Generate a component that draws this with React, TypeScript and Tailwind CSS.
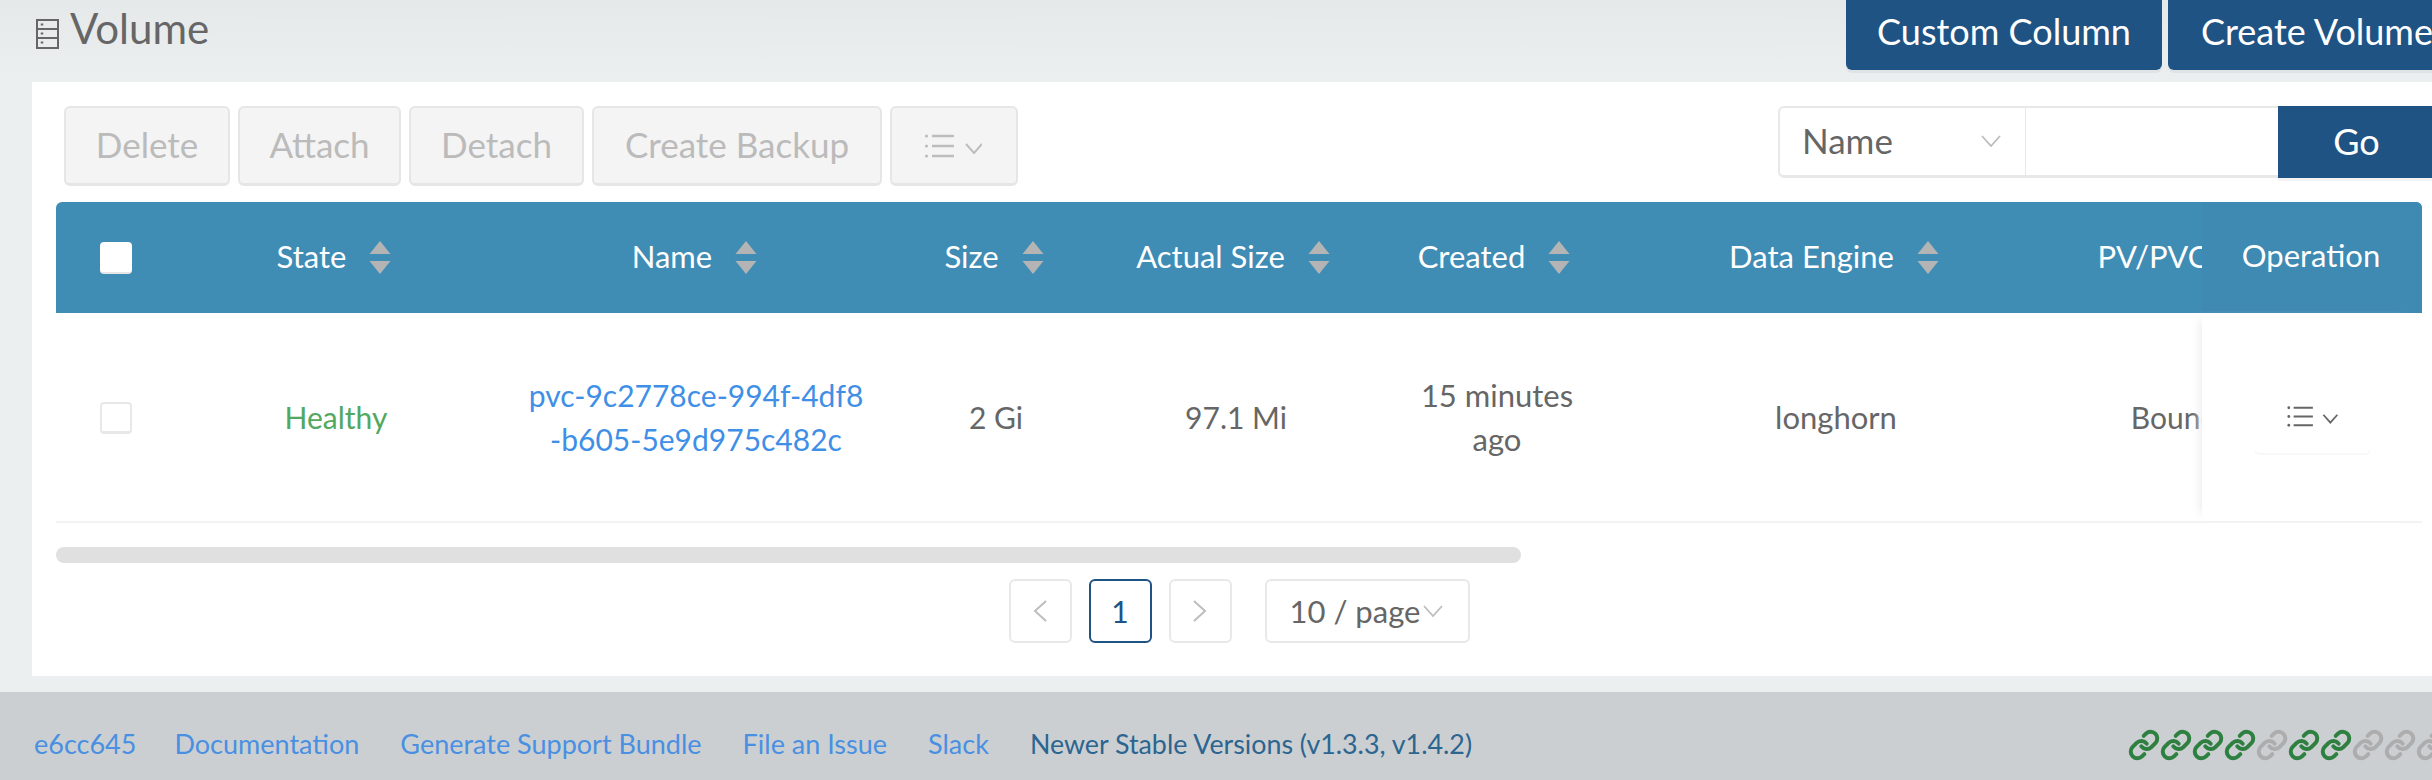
import { Link } from "lucide-react";

const linkStates = [true, true, true, true, false, true, true, false, false, false];

function SortIcon() {
  return (
    <svg width="22" height="33" viewBox="0 0 22 33" className="shrink-0 ml-[23px]">
      <path d="M11 0 L21.500 13 H0.500 Z" fill="#b4b4b4" />
      <path d="M0.500 20 H21.500 L11 33 Z" fill="#b4b4b4" />
    </svg>
  );
}

function ListChevron({ color, width = 58, height = 24 }: { color: string; width?: number; height?: number }) {
  return (
    <svg width={width} height={height} viewBox="0 0 58 24" fill="none" stroke={color} strokeWidth="2.500">
      <circle cx="2.500" cy="2" r="1.600" fill={color} stroke="none" />
      <circle cx="2.500" cy="12" r="1.600" fill={color} stroke="none" />
      <circle cx="2.500" cy="22" r="1.600" fill={color} stroke="none" />
      <path d="M8 2 H30 M8 12 H30 M8 22 H30" />
      <path d="M42 10 L50 19 L58 10" strokeWidth="2" />
    </svg>
  );
}

function ServerIcon() {
  return (
    <svg width="23" height="30" viewBox="0 0 23 30" fill="none" stroke="#666" strokeWidth="2">
      <rect x="1" y="1" width="21" height="28" />
      <path d="M1 10 H22 M1 19 H22" />
      <path d="M6 4.500 V6.500 M6 13.500 V15.500 M6 22.500 V24.500" strokeWidth="2.500" />
    </svg>
  );
}

function Chevron({ color = "#bdbdbd" }: { color?: string }) {
  return (
    <svg width="20" height="12" viewBox="0 0 20 12" fill="none" stroke={color} strokeWidth="1.800">
      <path d="M1 1 L10 11 L19 1" />
    </svg>
  );
}

function HeadCell({ label, width, className = "" }: { label: string; width: string; className?: string }) {
  return (
    <div className={`${width} shrink-0 flex items-center justify-center whitespace-nowrap ${className}`}>
      <span className="-mt-[2px]">{label}</span>
      <SortIcon />
    </div>
  );
}

function DisabledButton({ width, label }: { width: string; label: string }) {
  return (
    <button className={`${width} h-[80px] pb-[2px] rounded-[6px] border-2 border-b-[3px] border-[#e6e6e6] bg-[#f4f4f4] text-[#bbbbbb] text-[35px]`}>
      {label}
    </button>
  );
}

export default function App() {
  return (
    <div className="w-[2432px] h-[780px] overflow-hidden flex flex-col bg-[#ebeff0] font-['Lato','Open_Sans',sans-serif]">
      {/* Title bar */}
      <div className="h-[82px] shrink-0 flex items-start bg-gradient-to-b from-[#e6e9ea] to-[#ebeff0]">
        <div className="w-[1846px] shrink-0 pl-[36px] pt-[6px] flex items-center gap-[11px] text-[#666666] text-[42px] leading-[44px]">
          <span className="mt-[11px]">
            <ServerIcon />
          </span>
          <span>Volume</span>
        </div>
        <button className="w-[316px] h-[70px] pb-[9px] shrink-0 rounded-b-[6px] bg-[#1f5384] text-white text-[36px] shadow-[0_3px_0_#dfe3e5]">
          Custom Column
        </button>
        <button className="w-[316px] h-[70px] pb-[9px] pl-[33px] text-left shrink-0 ml-[6px] rounded-b-[6px] bg-[#1f5384] text-white text-[36px] whitespace-nowrap shadow-[0_3px_0_#dfe3e5]">
          Create Volume
        </button>
      </div>

      {/* Panel */}
      <div className="ml-[32px] w-[2400px] h-[594px] shrink-0 bg-white pl-[24px] pt-[24px]">
        <div className="pl-[8px] h-[80px] flex justify-between items-start">
          <div className="flex gap-[8px]">
            <DisabledButton width="w-[166px]" label="Delete" />
            <DisabledButton width="w-[163px]" label="Attach" />
            <DisabledButton width="w-[175px]" label="Detach" />
            <DisabledButton width="w-[290px]" label="Create Backup" />
            <button className="w-[128px] h-[80px] rounded-[6px] border-2 border-b-[3px] border-[#e6e6e6] bg-[#f4f4f4] flex items-center justify-center pr-[2px]">
              <ListChevron color="#bdbdbd" />
            </button>
          </div>
          <div className="w-[654px] h-[72px] flex">
            <div className="w-[248px] flex items-center justify-between pl-[22px] pr-[24px] pb-[2px] border-2 border-r border-b-[3px] border-[#e8e8e8] rounded-l-[6px] text-[#666666] text-[35px]">
              <span>Name</span>
              <Chevron />
            </div>
            <div className="w-[252px] border-t-2 border-b-[3px] border-[#e8e8e8]" />
            <button className="flex-1 bg-[#1f5384] text-white text-[36px] shadow-[0_3px_0_#f3f3f3] pb-[2px] pl-[3px]">Go</button>
          </div>
        </div>

        <div className="w-[2366px] mt-[16px]">
          {/* Header */}
          <div className="h-[111px] flex rounded-t-[6px] bg-[#3f8cb5] text-white text-[31px] overflow-hidden">
            <div className="flex-1 min-w-0 flex items-center overflow-hidden">
              <div className="w-[120px] shrink-0 flex justify-center">
                <span className="w-[32px] h-[32px] rounded-[4px] bg-white border-b-[2px] border-[#e5e5e5]" />
              </div>
              <HeadCell label="State" width="w-[320px]" className="pr-[4px]" />
              <HeadCell label="Name" width="w-[400px]" className="pr-[3px]" />
              <HeadCell label="Size" width="w-[200px]" className="pr-[4px]" />
              <HeadCell label="Actual Size" width="w-[280px]" className="pr-[6px]" />
              <HeadCell label="Created" width="w-[242px]" className="pr-[6px]" />
              <HeadCell label="Data Engine" width="w-[436px]" className="pr-[4px]" />
              <HeadCell label="PV/PVC" width="w-[252px]" className="pr-[9px]" />
            </div>
            <div className="w-[220px] shrink-0 flex items-center justify-center pr-[2px] pb-[4px] bg-[#3e8ab2]">Operation</div>
          </div>

          {/* Row */}
          <div className="h-[210px] flex border-b-2 border-[#f3f3f3] text-[#666666] text-[30px] leading-[44px] text-center">
            <div className="flex-1 min-w-0 flex items-center overflow-hidden">
              <div className="w-[120px] shrink-0 flex justify-center">
                <span className="w-[32px] h-[32px] mt-[2px] rounded-[4px] bg-white border-2 border-b-[3px] border-[#e8e8e8]" />
              </div>
              <div className="w-[320px] shrink-0 text-[#52a860]">Healthy</div>
              <div className="w-[400px] shrink-0 text-[#3f8fe6]">
                pvc-9c2778ce-994f-4df8
                <br />
                -b605-5e9d975c482c
              </div>
              <div className="w-[200px] shrink-0">2 Gi</div>
              <div className="w-[280px] shrink-0">97.1 Mi</div>
              <div className="w-[242px] shrink-0 text-[31px]">
                15 minutes
                <br />
                ago
              </div>
              <div className="w-[436px] shrink-0 text-[31px]">longhorn</div>
              <div className="w-[240px] shrink-0">Bound</div>
            </div>
            <div className="w-[220px] shrink-0 flex flex-col items-center pt-[93px] shadow-[-10px_0_10px_-8px_#ececec]">
              <ListChevron color="#666666" width={52} height={21} />
              <span className="w-[117px] h-[26px] rounded-b-[6px] shadow-[0_2px_0_#f8f8f8]" />
            </div>
          </div>

          {/* Scrollbar */}
          <div className="w-[1465px] h-[16px] mt-[24px] rounded-full bg-[#e0e0e0]" />

          {/* Pagination */}
          <div className="mt-[16px] flex justify-center text-[30px]">
            <div className="w-[63px] h-[64px] rounded-[6px] border-2 border-[#e8e8e8] flex items-center justify-center">
              <svg width="14" height="22" viewBox="0 0 14 22" fill="none" stroke="#bdbdbd" strokeWidth="2">
                <path d="M13 1 L2 11 L13 21" />
              </svg>
            </div>
            <div className="w-[63px] h-[64px] ml-[17px] rounded-[6px] border-2 border-[#1f5384] text-[#1f5384] flex items-center justify-center">
              1
            </div>
            <div className="w-[63px] h-[64px] ml-[17px] rounded-[6px] border-2 border-[#e8e8e8] flex items-center justify-center">
              <svg width="14" height="22" viewBox="0 0 14 22" fill="none" stroke="#bdbdbd" strokeWidth="2">
                <path d="M1 1 L12 11 L1 21" />
              </svg>
            </div>
            <div className="w-[205px] h-[64px] ml-[33px] rounded-[6px] border-2 border-[#e8e8e8] text-[#666666] text-[31px] flex items-center pl-[23px] gap-[3px]">
              <span>10 / page</span>
              <Chevron />
            </div>
          </div>
        </div>
      </div>

      {/* Footer */}
      <div className="mt-[16px] h-[88px] shrink-0 bg-[#cbcfd2] flex items-center pl-[34px] text-[27px] text-[#4a90e2] whitespace-nowrap">
        <div className="flex gap-[41px] mt-[17px]">
          <a className="-mr-[3px]">e6cc645</a>
          <a>Documentation</a>
          <a>Generate Support Bundle</a>
          <a>File an Issue</a>
          <a>Slack</a>
          <span className="text-[#2b6590] text-[26.800px]">Newer Stable Versions (v1.3.3, v1.4.2)</span>
        </div>
        <div className="ml-auto w-[304px] shrink-0 flex overflow-hidden mt-[17px]">
          {linkStates.map((on, i) => (
            <span key={i} className="w-[32px] shrink-0 flex justify-center">
              <Link size={32} strokeWidth={3} className={`shrink-0 ${on ? "text-[#2e8040]" : "text-[#adadad]"}`} />
            </span>
          ))}
        </div>
      </div>
    </div>
  );
}
